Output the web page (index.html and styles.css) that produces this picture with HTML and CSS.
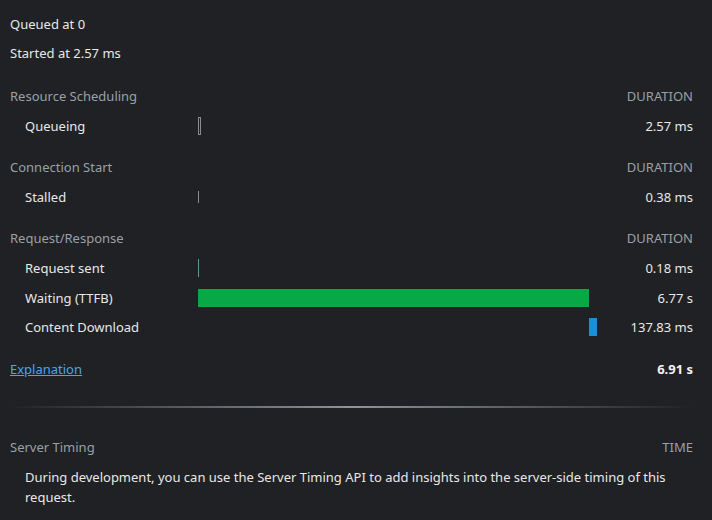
FILE: index.html
```html
<!DOCTYPE html>
<html>
<head>
<meta charset="utf-8">
<link rel="stylesheet" href="styles.css">
</head>
<body>
<div class="panel">
  <div class="meta">
    <div class="meta-line">Queued at 0</div>
    <div class="meta-line">Started at 2.57 ms</div>
  </div>

  <div class="section first">
    <div class="sec-head"><span>Resource Scheduling</span><span>DURATION</span></div>
    <div class="row">
      <span class="label">Queueing</span>
      <span class="track"><span class="bar outline" style="left:0;width:3px"></span></span>
      <span class="value">2.57 ms</span>
    </div>
  </div>

  <div class="section">
    <div class="sec-head"><span>Connection Start</span><span>DURATION</span></div>
    <div class="row">
      <span class="label">Stalled</span>
      <span class="track"><span class="bar tick short" style="left:0"></span></span>
      <span class="value">0.38 ms</span>
    </div>
  </div>

  <div class="section">
    <div class="sec-head"><span>Request/Response</span><span>DURATION</span></div>
    <div class="row">
      <span class="label">Request sent</span>
      <span class="track"><span class="bar tick sent" style="left:0"></span></span>
      <span class="value">0.18 ms</span>
    </div>
    <div class="row tight">
      <span class="label">Waiting (TTFB)</span>
      <span class="track"><span class="bar waiting" style="left:0;width:97.75%"></span></span>
      <span class="value">6.77 s</span>
    </div>
    <div class="row">
      <span class="label">Content Download</span>
      <span class="track"><span class="bar download" style="left:97.75%;width:2%"></span></span>
      <span class="value">137.83 ms</span>
    </div>
  </div>

  <div class="total">
    <a class="link" href="#">Explanation</a>
    <span class="total-value">6.91 s</span>
  </div>

  <div class="divider"></div>

  <div class="section server">
    <div class="sec-head"><span>Server Timing</span><span>TIME</span></div>
    <p class="note">During development, you can use the Server Timing API to add insights into the server-side timing of this request.</p>
  </div>
</div>
</body>
</html>
```

FILE: styles.css
```css
html, body {
  margin: 0;
  padding: 0;
  background: #202124;
}
body {
  font-family: "Noto Sans", "Open Sans", sans-serif;
  font-size: 13px;
  color: #e8e8e8;
  width: 712px;
  height: 520px;
  overflow: hidden;
}
.panel {
  padding: 10px 19px 0 10px;
}
.meta-line {
  height: 29px;
  line-height: 29px;
}
.section {
  margin-top: 11px;
}
.section.first {
  margin-top: 13px;
}
.sec-head {
  display: flex;
  justify-content: space-between;
  height: 30px;
  line-height: 30px;
  color: #9aa0a6;
}
.row {
  display: flex;
  align-items: center;
  height: 30px;
  padding-left: 15px;
}
.row.tight {
  height: 29px;
}
.label {
  width: 173px;
  flex: none;
}
.track {
  position: relative;
  width: 400px;
  height: 18px;
  flex: none;
}
.value {
  flex: 1;
  text-align: right;
}
.bar {
  position: absolute;
  top: 0;
  height: 18px;
  box-sizing: border-box;
}
.bar.outline {
  border: 1px solid #8c8c8c;
}
.bar.tick {
  width: 1px;
  background: #8c8c8c;
}
.bar.tick.short {
  top: 3px;
  height: 12px;
}
.bar.tick.sent {
  background: #5e9a9a;
}
.bar.waiting {
  background: #07a846;
}
.bar.download {
  background: #1a8fdc;
}
.total {
  display: flex;
  justify-content: space-between;
  align-items: center;
  height: 30px;
  margin-top: 12px;
}
.link {
  color: #4ea3ec;
  text-decoration: underline;
}
.total-value {
  font-weight: bold;
  color: #f4f4f4;
}
.divider {
  height: 2px;
  margin-top: 22px;
  background: linear-gradient(to right, rgba(154,160,166,0) 0%, #8e9498 50%, rgba(154,160,166,0) 100%);
}
.section.server {
  margin-top: 24px;
}
.note {
  margin: 5px 0 0 15px;
  line-height: 20px;
}
```
